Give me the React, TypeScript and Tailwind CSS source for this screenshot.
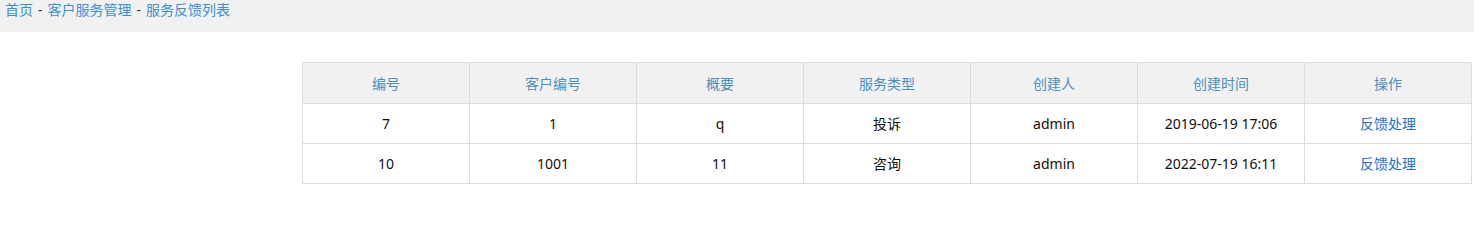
import React from "react";

const headers = ["编号", "客户编号", "概要", "服务类型", "创建人", "创建时间", "操作"];
const rows = [
  ["7", "1", "q", "投诉", "admin", "2019-06-19 17:06"],
  ["10", "1001", "11", "咨询", "admin", "2022-07-19 16:11"],
];

export default function App() {
  return (
    <div className="w-[1474px] h-[233px] bg-white font-['Noto_Sans','Noto_Sans_CJK_SC',sans-serif]">
      <div className="h-[32px] bg-[#f1f1f1] px-[5px] text-[14px] leading-[20px] flex items-start">
        <a className="text-[#3d8fd0]">首页</a>
        <span className="text-[#333] px-[5px]">-</span>
        <a className="text-[#3d8fd0]">客户服务管理</a>
        <span className="text-[#333] px-[5px]">-</span>
        <a className="text-[#3d8fd0]">服务反馈列表</a>
      </div>
      <div className="pt-[30px] pl-[302px]">
        <table className="w-[1170px] table-fixed border-collapse text-[14px]">
          <thead>
            <tr className="bg-[#f1f1f1] h-[41px]">
              {headers.map((h) => (
                <th key={h} className="border border-[#dcdcdc] font-normal text-[#4a8fc0] text-center">
                  {h}
                </th>
              ))}
            </tr>
          </thead>
          <tbody>
            {rows.map((r, i) => (
              <tr key={i} className="h-[40px]">
                {r.map((c, j) => (
                  <td key={j} className="border border-[#dcdcdc] text-center text-[#111]">
                    {c}
                  </td>
                ))}
                <td className="border border-[#dcdcdc] text-center text-[#1e6fd6]">反馈处理</td>
              </tr>
            ))}
          </tbody>
        </table>
      </div>
    </div>
  );
}
